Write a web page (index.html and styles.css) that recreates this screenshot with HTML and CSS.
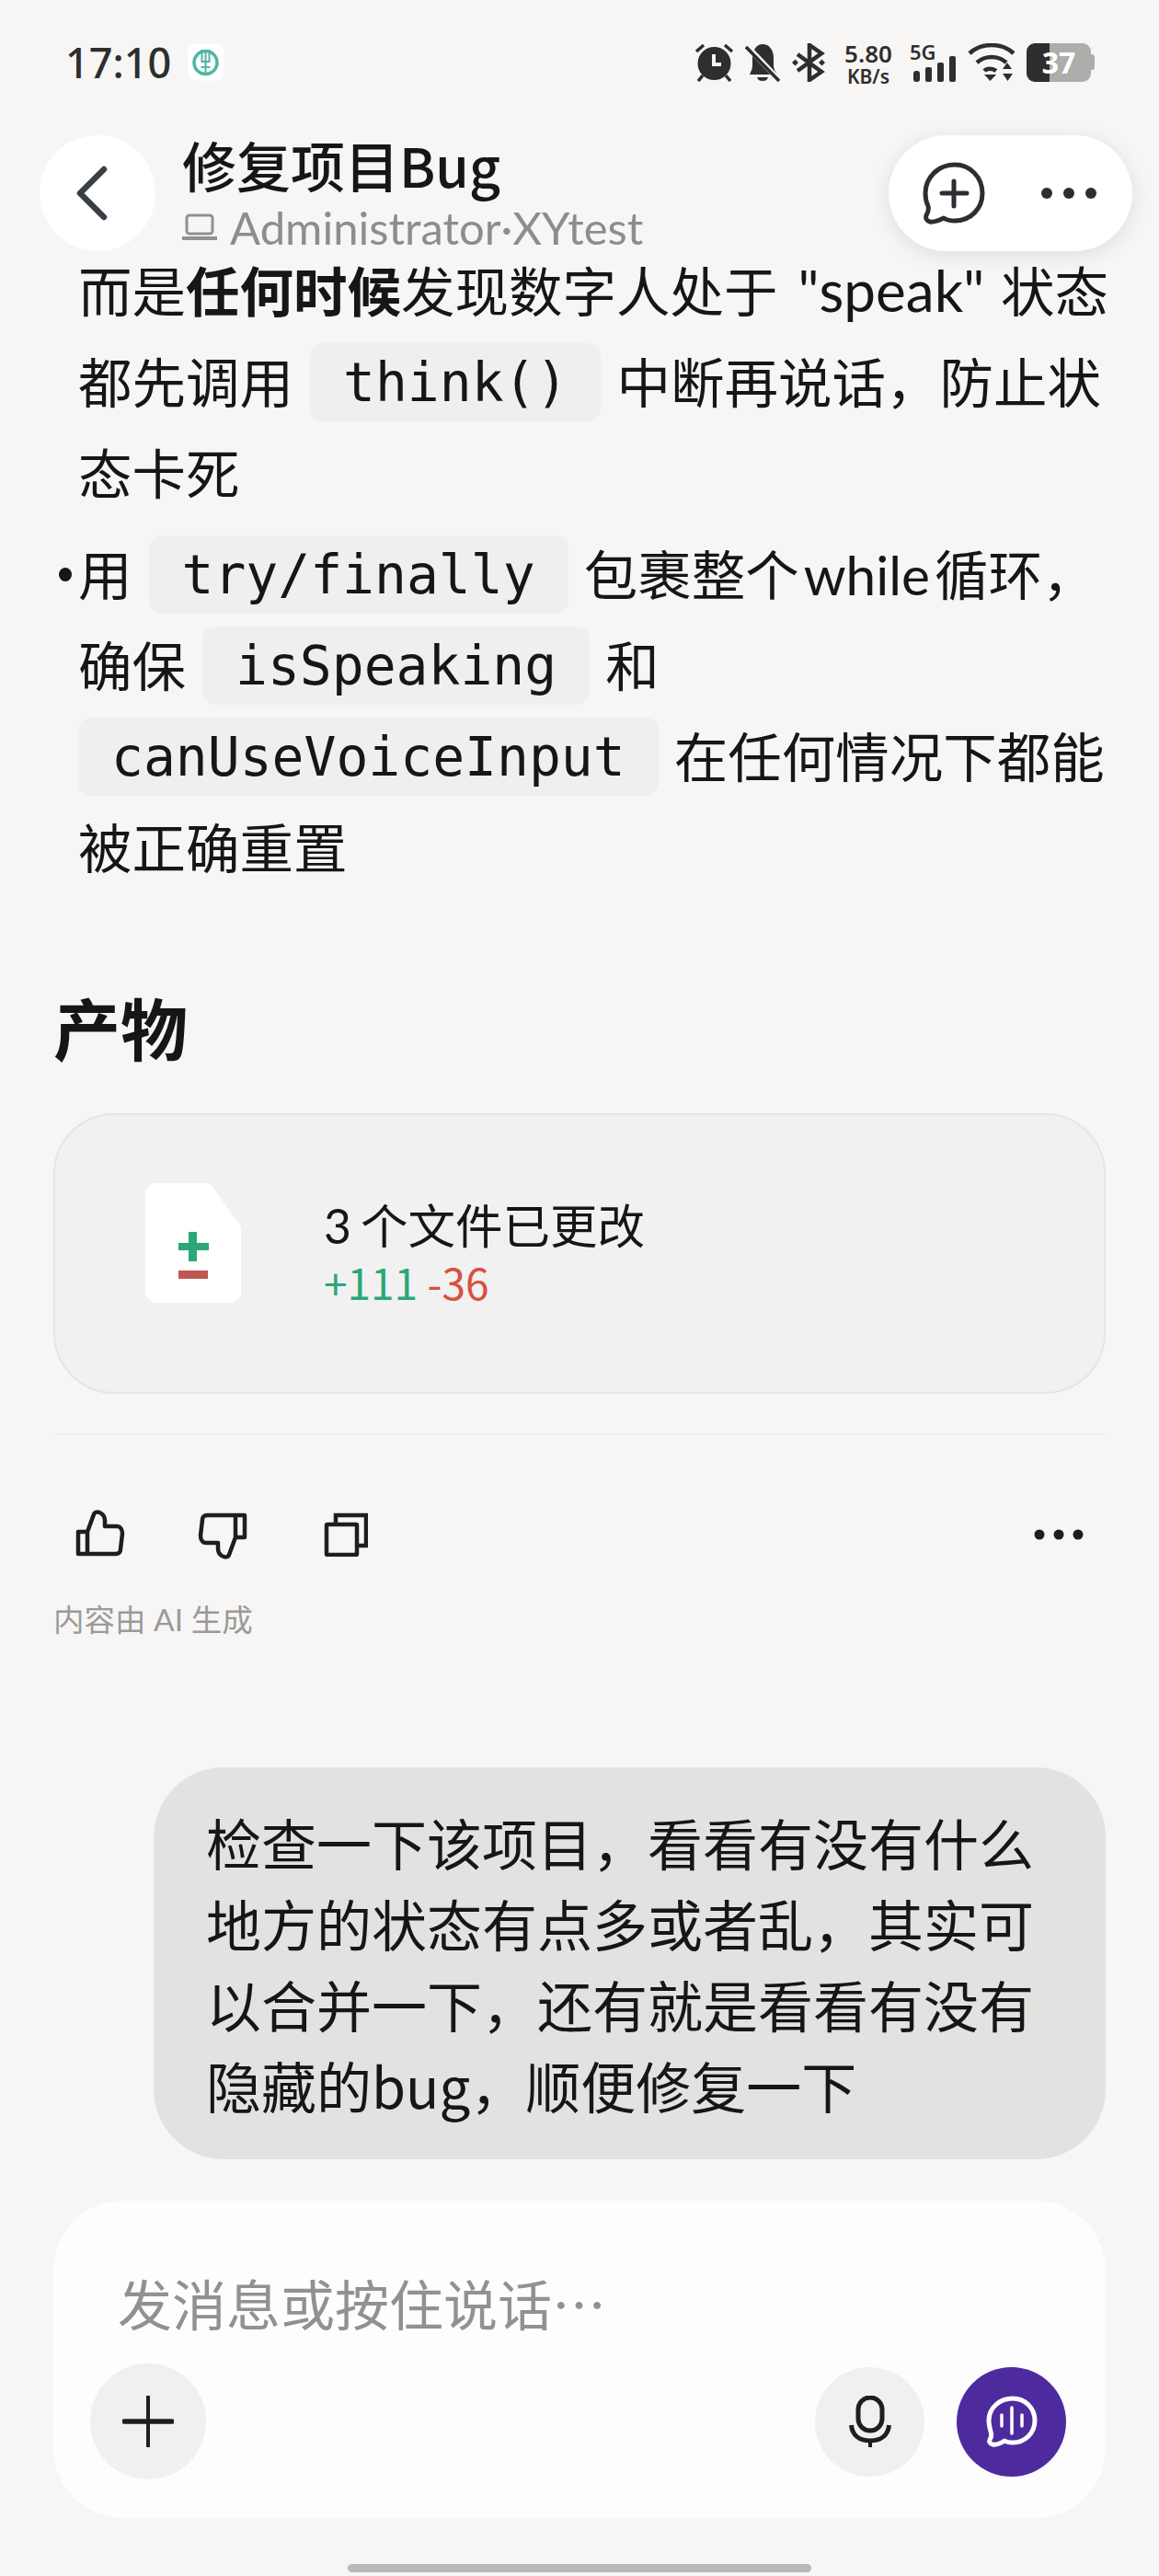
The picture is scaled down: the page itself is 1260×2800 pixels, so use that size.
FILE: index.html
```html
<!DOCTYPE html>
<html lang="zh-CN">
<head>
  <meta charset="UTF-8">
  <meta name="viewport" content="width=device-width, initial-scale=1.0">
  <title>修复项目Bug</title>
  <link rel="stylesheet" href="styles.css">
</head>
<body>
  <div class="phone">

    <!-- status bar -->
    <div class="status">
      <span class="time">17:10</span>
      <svg class="app-icon" width="40" height="41" viewBox="0 0 40 41">
        <rect x="0.5" y="0.5" width="39" height="40" rx="8" fill="#fff"/>
        <circle cx="19.5" cy="21" r="12.5" fill="none" stroke="#4fb5a4" stroke-width="3.5"/>
        <path d="M15.5 7v13h8V7M19.5 9v25M14.5 26h10" fill="none" stroke="#4fb5a4" stroke-width="2"/>
      </svg>
      <div class="status-right">
        <svg class="s-alarm" width="43" height="42" viewBox="0 0 43 42">
          <circle cx="21.5" cy="22" r="18" fill="#2e2e2e"/>
          <path d="M21 12v11h8" fill="none" stroke="#f7f6f5" stroke-width="4"/>
          <path d="M2 9l8-7M41 9l-8-7M4 41l5-6M39 41l-5-6" stroke="#2e2e2e" stroke-width="3.5"/>
        </svg>
        <svg class="s-bell" width="39" height="42" viewBox="0 0 39 42">
          <path d="M5 34c1-3 3-5 3-10V16C8 7 13 1 19 1c7 0 12 6 12 15v8c0 4 2 7 4 10z" fill="#2e2e2e"/>
          <path d="M13 37h12c-1 3-3 4-6 4s-5-1-6-4z" fill="#2e2e2e"/>
          <path d="M1 2l36 38" stroke="#f7f6f5" stroke-width="6"/>
          <path d="M1 4l36 37" stroke="#2e2e2e" stroke-width="3.5"/>
        </svg>
        <svg class="s-bt" width="36" height="42" viewBox="0 0 36 42">
          <path d="M6 12l26 19-13 9V2l13 9L6 30" fill="none" stroke="#2e2e2e" stroke-width="4.5"/>
          <path d="M0 21l3.500-3.500L7 21l-3.500 3.500zM29 21l3.500-3.500L36 21l-3.500 3.500z" fill="#2e2e2e"/>
        </svg>
        <div class="speed"><span>5.80</span><span class="unit">KB/s</span></div>
        <div class="signal">
          <span class="fiveg">5G</span>
          <svg width="48" height="30" viewBox="0 0 48 30">
            <rect x="1" y="17" width="7" height="12" rx="3" fill="#2e2e2e"/>
            <rect x="14" y="13" width="7" height="16" rx="2" fill="#2e2e2e"/>
            <rect x="27" y="8" width="7" height="21" rx="2" fill="#2e2e2e"/>
            <rect x="40" y="1" width="7" height="28" rx="2" fill="#2e2e2e"/>
          </svg>
        </div>
        <svg class="s-wifi" width="52" height="42" viewBox="0 0 52 42">
          <path d="M2 11C15 -1 37 -1 50 11M10 21c9-8 23-8 32 0M18 30c3-3 9-3 13 0" fill="none" stroke="#2e2e2e" stroke-width="4.500"/>
          <path d="M18 34h13l-6.500 7zM38 28l5-7 5 7zM38 33h11l-5.500 8z" fill="#2e2e2e"/>
        </svg>
        <div class="battery"><span>37</span></div>
      </div>
    </div>

    <div class="header">
      <div class="back">
        <svg width="36" height="60" viewBox="0 0 36 60">
          <path d="M31 4L5 30l26 26" fill="none" stroke="#3a3f45" stroke-width="6.500" stroke-linecap="round" stroke-linejoin="round"/>
        </svg>
      </div>
      <div class="header-text">
        <div class="title">修复项目Bug</div>
        <div class="subtitle">
          <svg width="38" height="30" viewBox="0 0 38 30">
            <rect x="5" y="2" width="28" height="20" rx="3" fill="none" stroke="#919191" stroke-width="3"/>
            <path d="M0 27h38" stroke="#919191" stroke-width="4"/>
          </svg>
          <span>Administrator·XYtest</span>
        </div>
      </div>
      <div class="header-actions">
        <svg width="68" height="68" viewBox="0 0 68 68">
          <path d="M35 3c17 0 30 14 30 31S52 64 35 64c-5 0-9-1-12-3-4 2-10 5-15 4-4-1-5-4-4-7 2-3 3-6 2-10-2-4-3-9-3-14C3 17 17 3 35 3z" fill="none" stroke="#2b2f33" stroke-width="5" stroke-linejoin="round"/>
          <path d="M34 21v27M21 34h27" stroke="#2b2f33" stroke-width="5" stroke-linecap="round"/>
        </svg>
        <svg width="62" height="14" viewBox="0 0 62 14">
          <circle cx="7" cy="7" r="6" fill="#2b2f33"/>
          <circle cx="31" cy="7" r="6" fill="#2b2f33"/>
          <circle cx="55" cy="7" r="6" fill="#2b2f33"/>
        </svg>
      </div>
    </div>

    <div class="chat">
      <ul class="answer">
        <li class="no-bullet">而是<b>任何时候</b>发现数字人处于 <span class="quoted">"speak"</span> 状态<br>都先调用<code>think()</code>中断再说话，防止状<br>态卡死</li>
        <li>用<code>try/finally</code>包裹整个<span class="word">while</span>循环，<br>确保<code>isSpeaking</code>和<br><code class="lead">canUseVoiceInput</code>在任何情况下都能<br>被正确重置</li>
      </ul>

      <h2>产物</h2>

      <div class="card">
        <svg class="file-icon" width="104" height="130" viewBox="0 0 104 130">
          <path d="M8 0h58c3 0 5 1 7 4l28 39c2 3 3 5 3 8v71l-8 8H8l-8-8V8z" fill="#fff"/>
          <path d="M47 53h9v12h13v8H56v12h-9V73H36v-8h11z" fill="#2aa876"/>
          <rect x="36" y="95" width="32" height="9" fill="#c0564f"/>
        </svg>
        <div class="card-text">
          <div class="card-title">3 个文件已更改</div>
          <div class="card-stats"><span class="plus">+111</span> <span class="minus">-36</span></div>
        </div>
      </div>

      <div class="divider"></div>

      <div class="actions">
        <svg width="54" height="54" viewBox="0 0 54 54">
          <path d="M3 48V24h10l7-19c1-3 5-3 8-1 3 2 4 5 4 8v6h13c4 0 6 4 6 8l-2 17c0 3-2 5-5 5zM13 24v24" fill="none" stroke="#1e1e1e" stroke-width="4.500" stroke-linejoin="round"/>
        </svg>
        <svg class="thumb-down" width="54" height="54" viewBox="0 0 54 54">
          <path d="M3 48V24h10l7-19c1-3 5-3 8-1 3 2 4 5 4 8v6h13c4 0 6 4 6 8l-2 17c0 3-2 5-5 5zM13 24v24" fill="none" stroke="#1e1e1e" stroke-width="4.500" stroke-linejoin="round"/>
        </svg>
        <svg class="copy" width="48" height="48" viewBox="0 0 48 48">
          <rect x="3" y="13" width="33" height="33" rx="1" fill="none" stroke="#1e1e1e" stroke-width="4.500"/>
          <path d="M13 13V3h33v33H36" fill="none" stroke="#1e1e1e" stroke-width="4.500"/>
        </svg>
        <svg class="more" width="54" height="12" viewBox="0 0 54 12">
          <circle cx="6" cy="6" r="5.500" fill="#1e1e1e"/>
          <circle cx="27" cy="6" r="5.500" fill="#1e1e1e"/>
          <circle cx="48" cy="6" r="5.500" fill="#1e1e1e"/>
        </svg>
      </div>
      <div class="ai-note">内容由 AI 生成</div>

      <div class="user-row">
        <div class="bubble">检查一下该项目，看看有没有什么<br>地方的状态有点多或者乱，其实可<br>以合并一下，还有就是看看有没有<br>隐藏的bug，顺便修复一下</div>
      </div>

      <div class="input-box">
        <div class="placeholder">发消息或按住说话…</div>
        <div class="input-tools">
          <div class="round plus-btn">
            <svg width="56" height="56" viewBox="0 0 56 56">
              <path d="M28 1v54" stroke="#1e1e1e" stroke-width="4" stroke-linecap="round"/>
              <path d="M2 28h52" stroke="#1e1e1e" stroke-width="5.500" stroke-linecap="round"/>
            </svg>
          </div>
          <div class="round mic-btn">
            <svg width="46" height="56" viewBox="0 0 46 56">
              <rect x="10" y="2" width="26" height="36" rx="13" fill="none" stroke="#1e1e1e" stroke-width="5"/>
              <path d="M2.500 32c1 11 9 17 20.500 17s19.500-6 20.500-17" fill="none" stroke="#1e1e1e" stroke-width="5"/>
              <path d="M23 48v8" stroke="#1e1e1e" stroke-width="4"/>
            </svg>
          </div>
          <div class="round voice-btn">
            <svg width="56" height="56" viewBox="0 0 56 56">
              <path d="M29 3c13 0 24 10 24 24S42 51 29 51c-3 0-6 0-9-2-3 2-8 5-13 4-3-1-4-3-3-5 2-3 2-6 1-9-1-4-2-8-2-12C3 13 15 3 29 3z" fill="none" stroke="#fff" stroke-width="5" stroke-linejoin="round"/>
              <path d="M17 21v12M28 13v28M39 21v12" stroke="#fff" stroke-width="3.500" stroke-linecap="round"/>
            </svg>
          </div>
        </div>
      </div>

      <div class="home-bar"></div>
    </div>
  </div>
</body>
</html>
```

FILE: styles.css
```css
* {
  box-sizing: border-box;
}

body {
  margin: 0;
  background: #f7f6f5;
  color: #161616;
  font-family: Lato, "Noto Sans CJK SC", sans-serif;
}

.phone {
  position: relative;
  width: 1260px;
  height: 2800px;
  overflow: hidden;
}

/* status bar */

.status {
  display: flex;
  align-items: flex-start;
  height: 100px;
  padding: 47px 74px 0 71px;
  color: #2e2e2e;
}

.time {
  font-size: 45px;
  font-weight: 500;
  line-height: 42px;
  width: 113px;
  font-family: "Noto Sans", sans-serif;
}

.app-icon {
  margin-left: 20px;
}

.status-right {
  display: flex;
  align-items: flex-start;
  margin-left: auto;
}

.s-bell {
  margin-left: 12px;
}

.s-bt {
  margin-left: 12px;
}

.speed {
  display: flex;
  flex-direction: column;
  align-items: center;
  width: 54px;
  margin-left: 20px;
  font-family: "Noto Sans", sans-serif;
  font-size: 26px;
  font-weight: 600;
  line-height: 22px;
}

.speed .unit {
  font-size: 21px;
  margin-top: 3px;
}

.signal {
  position: relative;
  width: 50px;
  height: 42px;
  margin-left: 18px;
}

.fiveg {
  display: block;
  font-family: "Noto Sans", sans-serif;
  font-size: 22px;
  font-weight: 600;
  line-height: 18px;
}

.signal svg {
  position: absolute;
  left: 3px;
  top: 13px;
}

.s-wifi {
  margin-left: 13px;
}

.battery {
  position: relative;
  width: 70px;
  height: 42px;
  margin-left: 12px;
  border-radius: 9px;
  background: linear-gradient(to right, #2e2e2e 25px, #adadab 25px);
  color: #fff;
  font-size: 32px;
  font-weight: 700;
  line-height: 42px;
  text-align: center;
  font-family: "Noto Sans", sans-serif;
}

.battery::after {
  content: "";
  position: absolute;
  right: -4px;
  top: 12px;
  width: 4px;
  height: 17px;
  border-radius: 0 3px 3px 0;
  background: #adadab;
}

/* header */

.header {
  position: absolute;
  top: 147px;
  left: 43px;
  right: 29px;
  display: flex;
  align-items: flex-start;
}

.back {
  display: flex;
  align-items: center;
  justify-content: center;
  width: 126px;
  height: 126px;
  padding-right: 12px;
  border-radius: 50%;
  background: #fff;
}

.header-text {
  margin-left: 29px;
}

.title {
  font-family: "Noto Sans CJK SC", sans-serif;
  font-size: 59px;
  font-weight: 500;
  line-height: 64px;
}

.subtitle {
  display: flex;
  align-items: center;
  gap: 14px;
  margin-top: 11px;
  color: #8d8d8d;
  font-size: 49px;
  line-height: 50px;
}

.header-actions {
  display: flex;
  align-items: center;
  justify-content: space-between;
  width: 265px;
  height: 126px;
  margin-left: auto;
  padding: 0 38px 0 37px;
  border-radius: 63px;
  background: #fff;
  box-shadow: 0 4px 22px rgba(0, 0, 0, 0.1);
}

/* chat */

.chat {
  padding: 166px 58px 0;
}

.answer {
  margin: 0;
  padding: 0 0 0 27px;
  list-style: none;
  font-size: 58.5px;
  line-height: 99px;
}

.answer li {
  position: relative;
  margin-bottom: 11px;
  white-space: nowrap;
}

.answer li:last-child {
  margin-bottom: 0;
}

.answer li::before {
  content: "";
  position: absolute;
  left: -21px;
  top: 42px;
  width: 14px;
  height: 15px;
  border-radius: 50%;
  background: #161616;
}

.answer li.no-bullet::before {
  display: none;
}

.answer b {
  font-weight: 700;
}

.quoted {
  margin: 0 3px 0 7px;
  font-size: 62px;
}

.word {
  margin: 0 5px;
}

code {
  margin: 0 17px 0 18px;
  padding: 9px 36px 8px;
  border-radius: 14px;
  background: #efefef;
  font-family: "DejaVu Sans Mono", "Liberation Mono", monospace;
  font-size: 58px;
  line-height: 1;
  vertical-align: 2px;
}

code.lead {
  margin-left: 0;
}

h2 {
  margin: 98px 0 0;
  font-size: 73px;
  font-weight: 700;
  line-height: 100px;
}

.card {
  display: flex;
  align-items: flex-start;
  height: 305px;
  margin-top: 41px;
  padding: 74px 0 0 98px;
  border: 2px solid #e5e5e3;
  border-radius: 66px;
  background: #f1f1f1;
}

.card-text {
  margin: 13px 0 0 90px;
}

.card-title {
  font-size: 51.5px;
  font-weight: 400;
  line-height: 66px;
  word-spacing: -3px;
}

.card-stats {
  margin-top: 3px;
  font-family: "Noto Sans CJK SC", sans-serif;
  font-size: 46px;
  font-weight: 400;
  line-height: 50px;
}

.plus {
  color: #2aa876;
}

.minus {
  color: #d9503f;
}

.divider {
  height: 2px;
  margin-top: 43px;
  background: #eeeeec;
}

.actions {
  display: flex;
  align-items: center;
  height: 56px;
  margin: 80px 0 0;
  padding: 0 24px;
}

.thumb-down {
  margin-left: 79px;
  transform: rotate(180deg);
}

.copy {
  margin-left: 83px;
}

.more {
  margin-left: auto;
}

.ai-note {
  margin-top: 44px;
  color: #9a9a9a;
  font-size: 33.5px;
  line-height: 40px;
}

.user-row {
  display: flex;
  justify-content: flex-end;
  margin-top: 141px;
}

.bubble {
  width: 1035px;
  padding: 37px 0 37px 57px;
  border-radius: 76px;
  background: #e3e2e0;
  font-family: "Noto Sans CJK SC", sans-serif;
  font-size: 60px;
  line-height: 88px;
  white-space: nowrap;
}

.input-box {
  height: 345px;
  margin-top: 45px;
  padding-top: 71px;
  border-radius: 76px;
  background: #fdfdfd;
}

.placeholder {
  padding-left: 70px;
  color: #919191;
  font-family: "Noto Sans CJK SC", sans-serif;
  font-size: 59px;
  line-height: 80px;
}

.input-tools {
  display: flex;
  align-items: center;
  height: 126px;
  margin-top: 26px;
  padding: 0 43px 0 40px;
}

.round {
  display: flex;
  align-items: center;
  justify-content: center;
  border-radius: 50%;
}

.plus-btn {
  width: 126px;
  height: 126px;
  background: #f0f0f0;
}

.mic-btn {
  width: 119px;
  height: 119px;
  margin-left: auto;
  background: #f0f0f0;
}

.voice-btn {
  width: 119px;
  height: 119px;
  margin-left: 35px;
  background: #4e2a9f;
}

.home-bar {
  width: 504px;
  height: 9px;
  margin: 50px auto 0;
  border-radius: 5px;
  background: #b9b9b7;
}
```
